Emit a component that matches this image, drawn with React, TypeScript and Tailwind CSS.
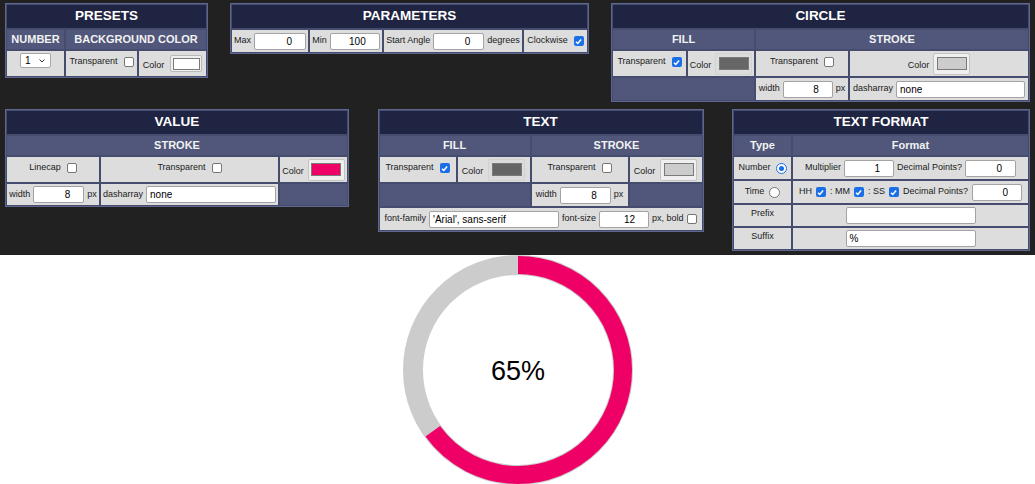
import React from 'react';

type Kids = { className?: string; children?: React.ReactNode };

function Check({ on }: { on?: boolean }) {
    if (on) {
        return (
            <span className="inline-flex h-[10px] w-[10px] shrink-0 items-center justify-center rounded-[2px] bg-[#1a6fe6]">
                <svg viewBox="0 0 10 10" className="h-[9px] w-[9px]">
                    <path d="M2.2 5.2 L4.2 7.2 L7.9 2.7" fill="none" stroke="white" strokeWidth="1.7" />
                </svg>
            </span>
        );
    }
    return <span className="inline-block h-[10px] w-[10px] shrink-0 rounded-[2px] border border-[#767676] bg-white" />;
}

function Radio({ on }: { on?: boolean }) {
    if (on) {
        return (
            <span className="inline-flex h-[11px] w-[11px] shrink-0 items-center justify-center rounded-full border-[1.5px] border-[#1a6fe6] bg-white">
                <span className="h-[5px] w-[5px] rounded-full bg-[#1a6fe6]" />
            </span>
        );
    }
    return <span className="inline-block h-[11px] w-[11px] shrink-0 rounded-full border border-[#767676] bg-white" />;
}

function Field({ value, className, left }: { value?: string; className: string; left?: boolean }) {
    return (
        <span
            className={`flex h-[17px] shrink-0 items-center rounded-[2px] border border-[#a3a3a3] bg-white text-[10px] text-black ${left ? 'justify-start pl-[3px]' : 'justify-end pr-[13px]'} ${className}`}
        >
            {value}
        </span>
    );
}

function Swatch({ color, dim }: { color: string; dim?: boolean }) {
    return (
        <span
            className={`flex h-[22px] w-[37px] shrink-0 items-center justify-center rounded-[2px] border ${dim ? 'border-[#d2d2d2] bg-[#dcdcdc]' : 'border-[#c4c4c4] bg-[#efefef]'}`}
        >
            <span className={`block h-[13px] w-[30px] border border-[#7a7a7a] ${color}`} />
        </span>
    );
}

function Cell({ className, children }: Kids) {
    return (
        <div className={`flex items-center justify-center gap-[3px] bg-[#dddddd] text-[9px] text-[#1a1a1a] ${className}`}>
            {children}
        </div>
    );
}

function Blank({ className }: { className: string }) {
    return <div className={`bg-[#50577a] ${className}`} />;
}

function Sub({ className, children }: Kids) {
    return (
        <div className={`flex items-center justify-center bg-[#50577a] text-[11px] font-bold text-[#f2f2f2] ${className}`}>
            {children}
        </div>
    );
}

function Panel({ title, className, children }: Kids & { title: string }) {
    return (
        <div className={`flex flex-col gap-[2px] border border-[#5e6690] bg-[#454c6e] p-px ${className}`}>
            <div className="flex h-[23px] items-center justify-center bg-[#1f2442] text-[13.5px] font-bold text-white">
                {title}
            </div>
            {children}
        </div>
    );
}

function Presets() {
    return (
        <Panel title="PRESETS" className="w-[203px]">
            <div className="flex h-[19px] gap-[2px]">
                <Sub className="w-[57px]">NUMBER</Sub>
                <Sub className="flex-1">BACKGROUND COLOR</Sub>
            </div>
            <div className="flex h-[25px] gap-[2px]">
                <Cell className="w-[57px] items-start pt-[2px]">
                    <span className="flex h-[15px] w-[31px] items-center justify-between rounded-[2px] border border-[#a8a8a8] bg-white pl-[4px] pr-[5px] text-[10px] text-black">
                        1
                        <svg viewBox="0 0 6 4" className="h-[4px] w-[6px]">
                            <path d="M0.5 0.5 L3 3 L5.5 0.5" fill="none" stroke="#333" strokeWidth="1" />
                        </svg>
                    </span>
                </Cell>
                <Cell className="w-[71px] gap-[6px] pb-[3px]">
                    Transparent <Check />
                </Cell>
                <Cell className="flex-1 gap-[6px]">
                    <span className="mt-[4px]">Color</span>
                    <span className="flex h-[17px] w-[32px] items-center justify-center rounded-[2px] border border-[#b8b8b8] bg-[#efefef]">
                        <span className="block h-[12px] w-[27px] border border-[#7a7a7a] bg-white" />
                    </span>
                </Cell>
            </div>
        </Panel>
    );
}

function Parameters() {
    return (
        <Panel title="PARAMETERS" className="w-[359px]">
            <div className="flex h-[22px] gap-[2px]">
                <Cell className="w-[76px]">
                    Max <Field value="0" className="w-[52px]" />
                </Cell>
                <Cell className="w-[72px]">
                    Min <Field value="100" className="w-[50px]" />
                </Cell>
                <Cell className="w-[138px]">
                    Start Angle <Field value="0" className="w-[51px]" /> degrees
                </Cell>
                <Cell className="flex-1 gap-[6px]">
                    Clockwise <Check on />
                </Cell>
            </div>
        </Panel>
    );
}

function CircleBox() {
    return (
        <Panel title="CIRCLE" className="w-[419px]">
            <div className="flex h-[19px] gap-[2px]">
                <Sub className="w-[141px]">FILL</Sub>
                <Sub className="flex-1">STROKE</Sub>
            </div>
            <div className="flex h-[25px] gap-[2px]">
                <Cell className="w-[73px] gap-[6px] pb-[3px]">
                    Transparent <Check on />
                </Cell>
                <Cell className="w-[66px] gap-[4px]">
                    <span className="mt-[4px]">Color</span>
                    <Swatch color="bg-[#666666]" dim />
                </Cell>
                <Cell className="w-[92px] gap-[6px] pb-[3px]">
                    Transparent <Check />
                </Cell>
                <Cell className="flex-1 gap-[4px]">
                    <span className="mt-[4px]">Color</span>
                    <Swatch color="bg-[#cccccc]" />
                </Cell>
            </div>
            <div className="flex h-[22px] gap-[2px]">
                <Blank className="w-[141px]" />
                <Cell className="w-[92px]">
                    width <Field value="8" className="w-[50px]" /> px
                </Cell>
                <Cell className="flex-1">
                    dasharray <Field value="none" left className="w-[129px]" />
                </Cell>
            </div>
        </Panel>
    );
}

function ValueBox() {
    return (
        <Panel title="VALUE" className="w-[344px]">
            <Sub className="h-[19px]">STROKE</Sub>
            <div className="flex h-[25px] gap-[2px]">
                <Cell className="w-[92px] gap-[6px] pb-[3px]">
                    Linecap <Check />
                </Cell>
                <Cell className="w-[177px] gap-[6px] pb-[3px]">
                    Transparent <Check />
                </Cell>
                <Cell className="flex-1 gap-[4px]">
                    <span className="mt-[4px]">Color</span>
                    <Swatch color="bg-[#ef0066]" />
                </Cell>
            </div>
            <div className="flex h-[21px] gap-[2px]">
                <Cell className="w-[92px]">
                    width <Field value="8" className="w-[51px]" /> px
                </Cell>
                <Cell className="w-[177px]">
                    dasharray <Field value="none" left className="w-[130px]" />
                </Cell>
                <Blank className="flex-1" />
            </div>
        </Panel>
    );
}

function TextBox() {
    return (
        <Panel title="TEXT" className="w-[326px]">
            <div className="flex h-[19px] gap-[2px]">
                <Sub className="w-[150px]">FILL</Sub>
                <Sub className="flex-1">STROKE</Sub>
            </div>
            <div className="flex h-[25px] gap-[2px]">
                <Cell className="w-[76px] gap-[6px] pb-[3px]">
                    Transparent <Check on />
                </Cell>
                <Cell className="w-[72px] gap-[5px]">
                    <span className="mt-[4px]">Color</span>
                    <Swatch color="bg-[#666666]" dim />
                </Cell>
                <Cell className="w-[96px] gap-[6px] pb-[3px]">
                    Transparent <Check />
                </Cell>
                <Cell className="flex-1 gap-[5px]">
                    <span className="mt-[4px]">Color</span>
                    <Swatch color="bg-[#cccccc]" />
                </Cell>
            </div>
            <div className="flex h-[22px] gap-[2px]">
                <Blank className="w-[150px]" />
                <Cell className="w-[96px]">
                    width <Field value="8" className="w-[51px]" /> px
                </Cell>
                <Blank className="flex-1" />
            </div>
            <Cell className="h-[22px]">
                font-family <Field value="'Arial', sans-serif" left className="w-[130px]" /> font-size{' '}
                <Field value="12" className="w-[50px]" /> px, bold <Check />
            </Cell>
        </Panel>
    );
}

function TextFormat() {
    return (
        <Panel title="TEXT FORMAT" className="w-[298px]">
            <div className="flex h-[19px] gap-[2px]">
                <Sub className="w-[57px]">Type</Sub>
                <Sub className="flex-1">Format</Sub>
            </div>
            <div className="flex h-[22px] gap-[2px]">
                <Cell className="w-[57px] gap-[5px]">
                    Number <Radio on />
                </Cell>
                <Cell className="flex-1">
                    Multiplier <Field value="1" className="w-[50px]" /> Decimal Points?{' '}
                    <Field value="0" className="w-[51px]" />
                </Cell>
            </div>
            <div className="flex h-[22px] gap-[2px]">
                <Cell className="w-[57px] gap-[5px]">
                    Time <Radio />
                </Cell>
                <Cell className="flex-1 gap-[4px]">
                    HH <Check on /> : MM <Check on /> : SS <Check on /> Decimal Points?{' '}
                    <Field value="0" className="w-[50px]" />
                </Cell>
            </div>
            <div className="flex h-[21px] gap-[2px]">
                <Cell className="w-[57px] pb-[4px]">Prefix</Cell>
                <Cell className="flex-1">
                    <Field className="h-[16px] w-[130px]" left />
                </Cell>
            </div>
            <div className="flex h-[21px] gap-[2px]">
                <Cell className="w-[57px] pb-[4px]">Suffix</Cell>
                <Cell className="flex-1">
                    <Field value="%" className="h-[16px] w-[130px]" left />
                </Cell>
            </div>
        </Panel>
    );
}

export default function App() {
    const r = 105;
    const circumference = 2 * Math.PI * r;
    const percent = 0.65;

    return (
        <div className="w-[1035px] font-['Liberation_Sans',Arial,sans-serif]">
            <div className="flex flex-col gap-[7px] bg-[#212121] px-[5px] pt-[3px] pb-[4px]">
                <div className="flex items-start justify-between">
                    <Presets />
                    <Parameters />
                    <CircleBox />
                </div>
                <div className="flex items-start justify-between">
                    <ValueBox />
                    <TextBox />
                    <TextFormat />
                </div>
            </div>
            <div className="flex justify-center bg-white">
                <svg width="230" height="230" viewBox="0 0 230 230">
                    <circle cx="115" cy="115" r={r} fill="none" stroke="#cccccc" strokeWidth="20" />
                    <circle
                        cx="115"
                        cy="115"
                        r={r}
                        fill="none"
                        stroke="#ef0066"
                        strokeWidth="18"
                        strokeDasharray={`${circumference * percent} ${circumference}`}
                        transform="rotate(-90 115 115)"
                    />
                    <text
                        x="115"
                        y="116"
                        textAnchor="middle"
                        dominantBaseline="central"
                        fontSize="27"
                        fill="#000"
                        fontFamily="'Liberation Sans', Arial, sans-serif"
                    >
                        65%
                    </text>
                </svg>
            </div>
        </div>
    );
}
